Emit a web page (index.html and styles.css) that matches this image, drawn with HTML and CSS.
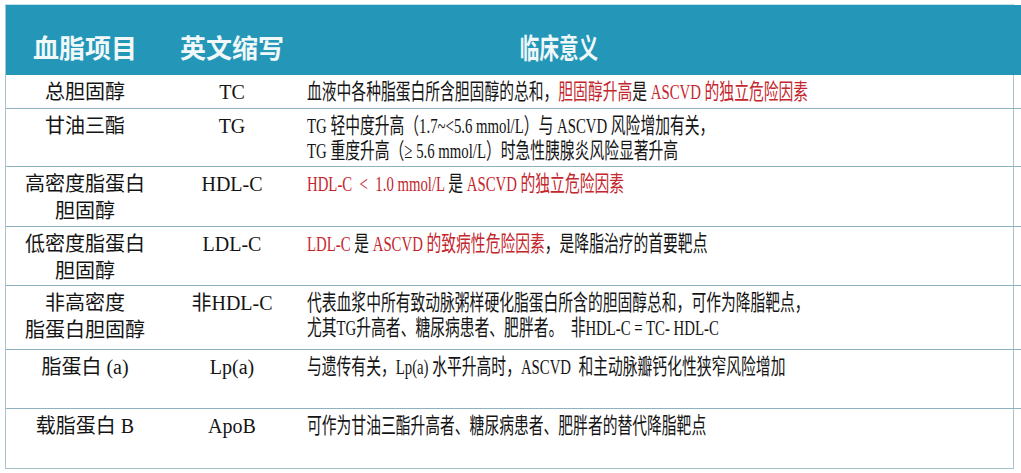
FILE: index.html
```html
<!DOCTYPE html>
<html lang="zh">
<head>
<meta charset="utf-8">
<title>血脂项目</title>
<link rel="stylesheet" href="styles.css">
</head>
<body>
<div class="table">
  <div class="row head">
    <div class="cell c1">血脂项目</div>
    <div class="cell c2">英文缩写</div>
    <div class="cell c3"><span class="cond-head">临床意义</span></div>
  </div>
  <div class="row">
    <div class="cell c1">总胆固醇</div>
    <div class="cell c2">TC</div>
    <div class="cell c3"><span class="cond">血液中各种脂蛋白所含胆固醇的总和，<span class="red">胆固醇升高</span>是 <span class="red">ASCVD 的独立危险因素</span></span></div>
  </div>
  <div class="row">
    <div class="cell c1">甘油三酯</div>
    <div class="cell c2">TG</div>
    <div class="cell c3"><span class="cond">TG 轻中度升高（1.7~&lt;5.6 mmol/L）与 ASCVD 风险增加有关，<br>TG 重度升高（≥ 5.6 mmol/L）时急性胰腺炎风险显著升高</span></div>
  </div>
  <div class="row">
    <div class="cell c1">高密度脂蛋白<br>胆固醇</div>
    <div class="cell c2">HDL-C</div>
    <div class="cell c3"><span class="cond"><span class="red">HDL-C &nbsp;&lt; &nbsp;1.0 mmol/L</span> 是 <span class="red">ASCVD 的独立危险因素</span></span></div>
  </div>
  <div class="row">
    <div class="cell c1">低密度脂蛋白<br>胆固醇</div>
    <div class="cell c2">LDL-C</div>
    <div class="cell c3"><span class="cond"><span class="red">LDL-C</span> 是 <span class="red">ASCVD 的致病性危险因素</span>，是降脂治疗的首要靶点</span></div>
  </div>
  <div class="row">
    <div class="cell c1">非高密度<br>脂蛋白胆固醇</div>
    <div class="cell c2">非HDL-C</div>
    <div class="cell c3"><span class="cond">代表血浆中所有致动脉粥样硬化脂蛋白所含的胆固醇总和，可作为降脂靶点，<br>尤其TG升高者、糖尿病患者、肥胖者。 &nbsp;非HDL-C = TC- HDL-C</span></div>
  </div>
  <div class="row">
    <div class="cell c1">脂蛋白 (a)</div>
    <div class="cell c2">Lp(a)</div>
    <div class="cell c3"><span class="cond">与遗传有关，Lp(a) 水平升高时，ASCVD &nbsp;和主动脉瓣钙化性狭窄风险增加</span></div>
  </div>
  <div class="row last">
    <div class="cell c1">载脂蛋白 B</div>
    <div class="cell c2">ApoB</div>
    <div class="cell c3"><span class="cond">可作为甘油三酯升高者、糖尿病患者、肥胖者的替代降脂靶点</span></div>
  </div>
</div>
</body>
</html>
```
FILE: styles.css
```css
html, body {
  margin: 0;
  padding: 0;
  background: #ffffff;
}

body {
  font-family: "Liberation Serif", "Noto Sans CJK SC", serif;
  color: #141414;
}

.table {
  margin: 4px 0 0 5px;
  width: 1009px;
  box-sizing: border-box;
  border: 1px solid #a6c3cf;
  border-top-color: #c3e2ec;
  display: grid;
  grid-template-columns: 158px 136px 1fr;
  grid-template-rows: 70px 34px 58px 60px 59px 64px 59px 59px;
}

.row {
  display: contents;
}

.cell {
  box-sizing: border-box;
  border-bottom: 1px solid #8fb2c2;
  font-size: 20px;
  line-height: 27px;
  padding-top: 4px;
}

.c1, .c2 {
  text-align: center;
}

.c3 {
  padding-left: 7px;
  font-size: 22px;
  line-height: 25px;
  padding-top: 4px;
}

.cond {
  display: inline-block;
  white-space: nowrap;
  transform: scaleX(0.672);
  transform-origin: left top;
}

.red {
  color: #c4262d;
}

.head .cell {
  background: #2497b9;
  color: #f1f8fa;
  font-family: "Noto Sans CJK SC", sans-serif;
  font-weight: bold;
  font-size: 26px;
  line-height: 30px;
  padding-top: 27px;
  border-bottom: none;
}

.head .c3 {
  padding-left: 0;
  padding-right: 238px;
  text-align: center;
  font-size: 28px;
}

.cond-head {
  display: inline-block;
  white-space: nowrap;
  transform: scaleX(0.7);
  transform-origin: center top;
}

.last .cell {
  border-bottom: none;
}
```
